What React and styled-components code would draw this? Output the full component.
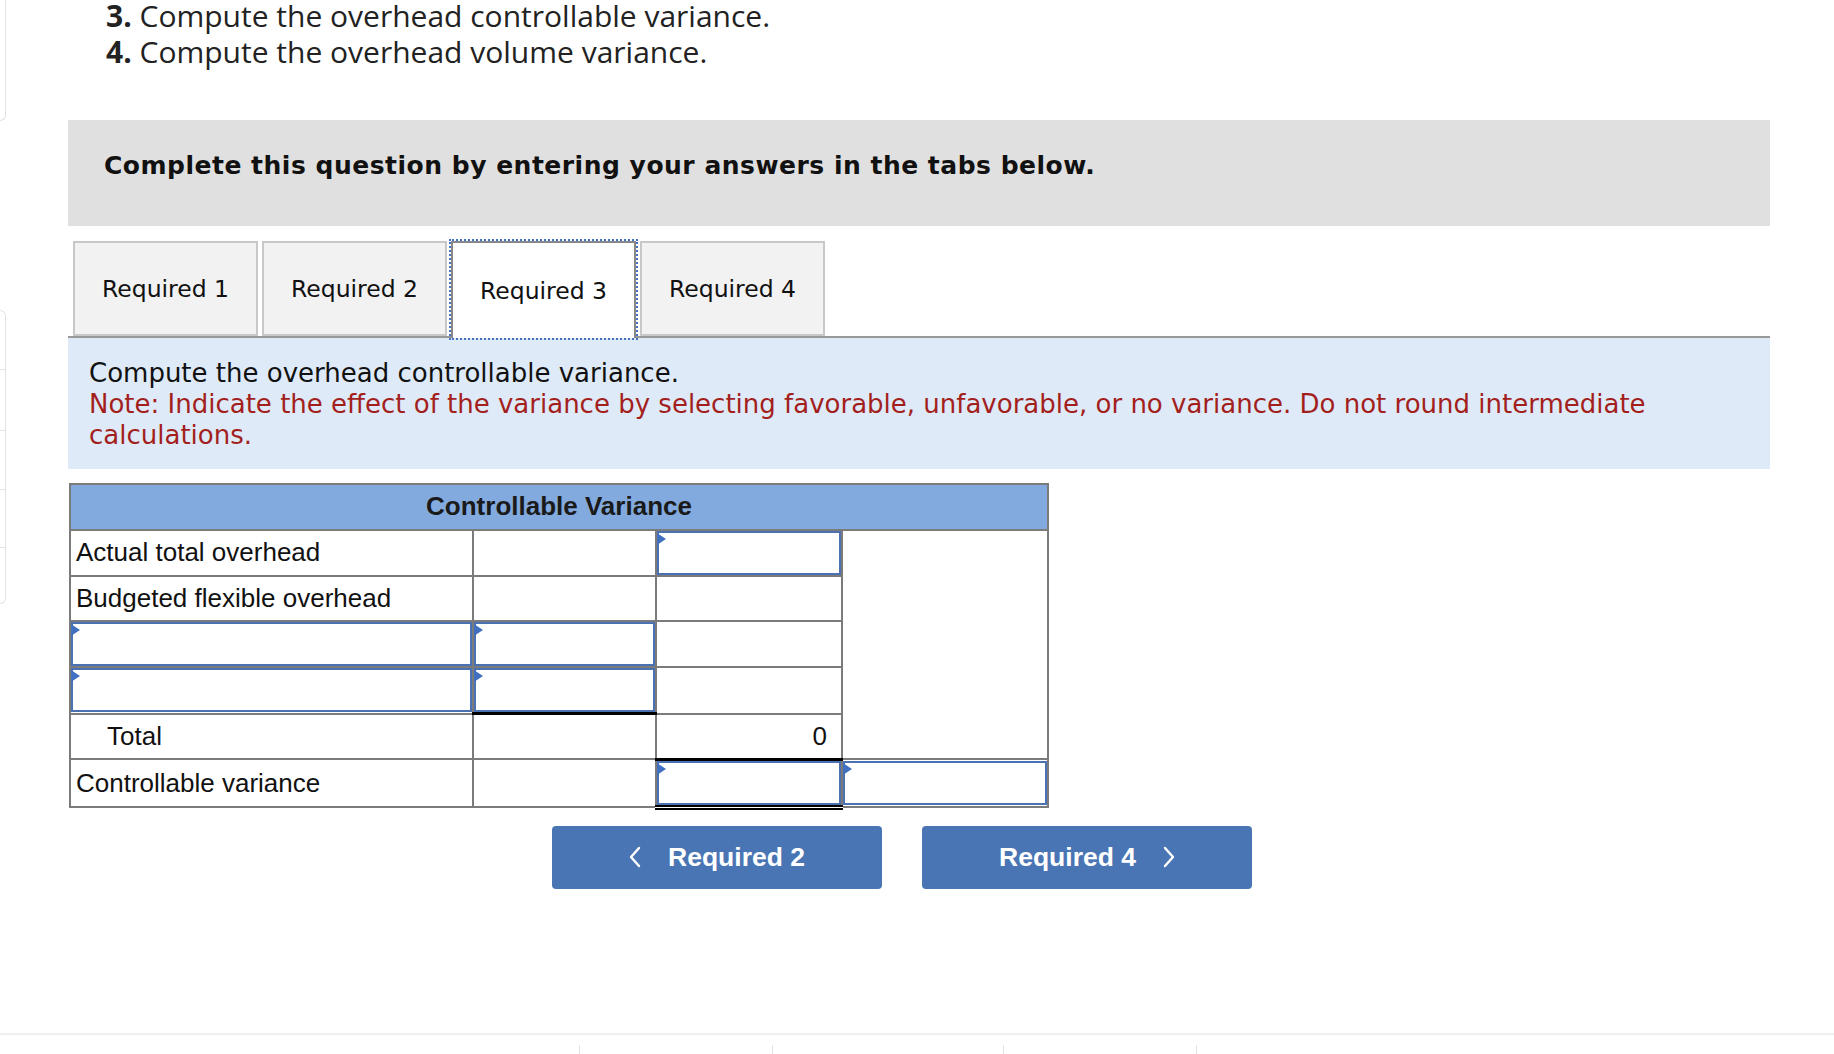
import styled, { createGlobalStyle } from "styled-components";

const GlobalStyle = createGlobalStyle`
  html, body {
    margin: 0;
    padding: 0;
    background: #fff;
    overflow: hidden;
  }
  * { box-sizing: border-box; }
`;

const Page = styled.div`
  width: 1834px;
  height: 1054px;
  overflow: hidden;
  display: flex;
  flex-direction: column;
`;

const Top = styled.div`
  display: flex;
  height: 1033px;
  flex: none;
`;

const Sidebar = styled.aside`
  width: 6px;
  flex: none;
  display: flex;
  flex-direction: column;
`;

const SideCard = styled.div`
  height: 121px;
  border: 1.5px solid #e3e3e3;
  border-left: none;
  border-top: none;
  border-radius: 0 0 12px 0;
`;

const SideList = styled.div`
  margin-top: 189px;
  border: 1.5px solid #e3e3e3;
  border-left: none;
  border-radius: 0 6px 6px 0;
`;

const SideItem = styled.div`
  height: ${(p) => p.$h}px;
  & + & {
    border-top: 1.5px solid #e3e3e3;
  }
`;

const Main = styled.main`
  flex: 1;
  padding: 0 64px 0 62px;
`;

const Questions = styled.ol`
  list-style: none;
  margin: -2px 0 0;
  padding: 0 0 0 38px;
  font-family: "Open Sans", sans-serif;
  font-size: 30px;
  line-height: 36px;
  color: #222;

  b {
    font-weight: 700;
  }
`;

const InstructionBox = styled.div`
  margin-top: 50px;
  height: 106px;
  background: #e0e0e0;
  padding: 31px 36px 0;
  font-family: "DejaVu Sans", Verdana, sans-serif;
  font-weight: 700;
  font-size: 25px;
  letter-spacing: 0.5px;
  line-height: 30px;
  color: #111;
`;

const TabRow = styled.div`
  margin-top: 15px;
  display: flex;
  gap: 4px;
  padding-left: 5px;
  border-bottom: 2px solid #999;
  height: 97px;
`;

const Tab = styled.button`
  width: 185px;
  height: ${(p) => (p.$active ? 97 : 95)}px;
  margin: 0;
  padding: 0;
  background: ${(p) => (p.$active ? "#fff" : "#f2f2f2")};
  border: 2px solid ${(p) => (p.$active ? "#888" : "#c8c8c8")};
  border-bottom: ${(p) => (p.$active ? "none" : "2px solid #c8c8c8")};
  outline: ${(p) => (p.$active ? "2px dotted #4573c4" : "none")};
  outline-offset: 0px;
  font-family: "DejaVu Sans", Verdana, sans-serif;
  font-size: 23.5px;
  color: #111;
  position: relative;
  z-index: ${(p) => (p.$active ? 1 : 0)};
`;

const Panel = styled.div`
  background: #deeaf7;
  padding: 20px 21px 18px;
  font-family: "DejaVu Sans", Verdana, sans-serif;
  font-size: 26px;
  line-height: 31px;
  color: #111;
`;

const Note = styled.div`
  color: #a31f1d;
`;

const Table = styled.table`
  margin: 14px 0 0 1px;
  border-collapse: collapse;
  border: 2px solid #7b7b7b;
  table-layout: fixed;
  width: 978px;
  font-family: "Liberation Sans", Arial, sans-serif;
  font-size: 26px;
  color: #111;
`;

const Col = styled.col`
  width: ${(p) => p.$w}px;
`;

const HeadCell = styled.th`
  height: 45.5px;
  padding: 0;
  background: #83aade;
  border: 2px solid #7b7b7b;
  font-weight: 700;
  text-align: center;
  color: #1a1a1a;
`;

const ruleBorder = (rule) =>
  rule === "single"
    ? "3px solid #000"
    : rule === "double"
    ? "5px double #000"
    : "2px solid #7b7b7b";

const Cell = styled.td`
  height: 45.5px;
  padding: 0 ${(p) => (p.$right ? 14 : 5)}px 0 ${(p) => p.$indent || 5}px;
  border: 2px solid #7b7b7b;
  border-bottom: ${(p) => ruleBorder(p.$rule)};
  text-align: ${(p) => (p.$right ? "right" : "left")};
  vertical-align: middle;
  white-space: nowrap;
`;

const InputCell = styled.td`
  height: 45.5px;
  padding: 0;
  border: 2px solid #7b7b7b;
  border-bottom: ${(p) => ruleBorder(p.$rule)};
  vertical-align: middle;
`;

const InputBox = styled.div`
  position: relative;
  height: 44px;
  border: 2.5px solid #4a72b3;
  background: #fff;

  &::before {
    content: "";
    position: absolute;
    top: 0;
    left: -2px;
    border-style: solid;
    border-width: 6px 0 6px 9px;
    border-color: transparent transparent transparent #4170c0;
  }
`;

const ButtonRow = styled.div`
  margin-top: 16px;
  padding-left: 484px;
  display: flex;
  gap: 40px;
`;

const NavButton = styled.button`
  width: 330px;
  height: 63px;
  border: none;
  border-radius: 4px;
  background: #4a75b4;
  color: #fff;
  font-family: "Liberation Sans", Arial, sans-serif;
  font-weight: 700;
  font-size: 26.5px;
  display: flex;
  align-items: center;
  justify-content: center;
  gap: 27px;
  padding: 0;
  svg {
    flex: none;
  }
`;

const Footer = styled.footer`
  border-top: 2px solid #f0f0f0;
  flex: 1;
`;

const FooterNav = styled.nav`
  margin-top: 10px;
  padding-left: 579px;
  display: flex;
`;

const FooterItem = styled.span`
  width: ${(p) => p.$w}px;
  height: 20px;
  border-left: 1px solid #e2e2e2;
`;

const Chevron = ({ dir }) => (
  <svg width="12" height="22" viewBox="0 0 12 22">
    <polyline
      points={dir === "left" ? "10,2 2,11 10,20" : "2,2 10,11 2,20"}
      fill="none"
      stroke="#fff"
      strokeWidth="2.4"
      strokeLinecap="round"
      strokeLinejoin="round"
    />
  </svg>
);

const tabs = ["Required 1", "Required 2", "Required 3", "Required 4"];

export default function App() {
  return (
    <>
      <GlobalStyle />
      <Page>
        <Top>
          <Sidebar>
            <SideCard />
            <SideList>
              {[58, 61, 59, 58, 56].map((h, i) => (
                <SideItem key={i} $h={h} />
              ))}
            </SideList>
          </Sidebar>
          <Main>
            <Questions>
              <li>
                <b>3.</b> Compute the overhead controllable variance.
              </li>
              <li>
                <b>4.</b> Compute the overhead volume variance.
              </li>
            </Questions>

            <InstructionBox>
              Complete this question by entering your answers in the tabs below.
            </InstructionBox>

            <TabRow>
              {tabs.map((t) => (
                <Tab key={t} $active={t === "Required 3"}>
                  {t}
                </Tab>
              ))}
            </TabRow>

            <Panel>
              <div>Compute the overhead controllable variance.</div>
              <Note>
                Note: Indicate the effect of the variance by selecting favorable,
                unfavorable, or no variance. Do not round intermediate
                calculations.
              </Note>
            </Panel>

            <Table>
              <colgroup>
                <Col $w={403} />
                <Col $w={183} />
                <Col $w={186} />
                <Col $w={206} />
              </colgroup>
              <thead>
                <tr>
                  <HeadCell colSpan={4}>Controllable Variance</HeadCell>
                </tr>
              </thead>
              <tbody>
                <tr>
                  <Cell>Actual total overhead</Cell>
                  <Cell />
                  <InputCell>
                    <InputBox />
                  </InputCell>
                  <Cell rowSpan={5} />
                </tr>
                <tr>
                  <Cell>Budgeted flexible overhead</Cell>
                  <Cell />
                  <Cell />
                </tr>
                <tr>
                  <InputCell>
                    <InputBox />
                  </InputCell>
                  <InputCell>
                    <InputBox />
                  </InputCell>
                  <Cell />
                </tr>
                <tr>
                  <InputCell>
                    <InputBox />
                  </InputCell>
                  <InputCell $rule="single">
                    <InputBox />
                  </InputCell>
                  <Cell />
                </tr>
                <tr>
                  <Cell $indent={36}>Total</Cell>
                  <Cell />
                  <Cell $right $rule="single">
                    0
                  </Cell>
                </tr>
                <tr>
                  <Cell>Controllable variance</Cell>
                  <Cell />
                  <InputCell $rule="double">
                    <InputBox />
                  </InputCell>
                  <InputCell>
                    <InputBox />
                  </InputCell>
                </tr>
              </tbody>
            </Table>

            <ButtonRow>
              <NavButton>
                <Chevron dir="left" />
                <span>Required 2</span>
              </NavButton>
              <NavButton>
                <span>Required 4</span>
                <Chevron dir="right" />
              </NavButton>
            </ButtonRow>
          </Main>
        </Top>
        <Footer>
          <FooterNav>
            {[193, 231, 193, 0].map((w, i) => (
              <FooterItem key={i} $w={w} />
            ))}
          </FooterNav>
        </Footer>
      </Page>
    </>
  );
}
